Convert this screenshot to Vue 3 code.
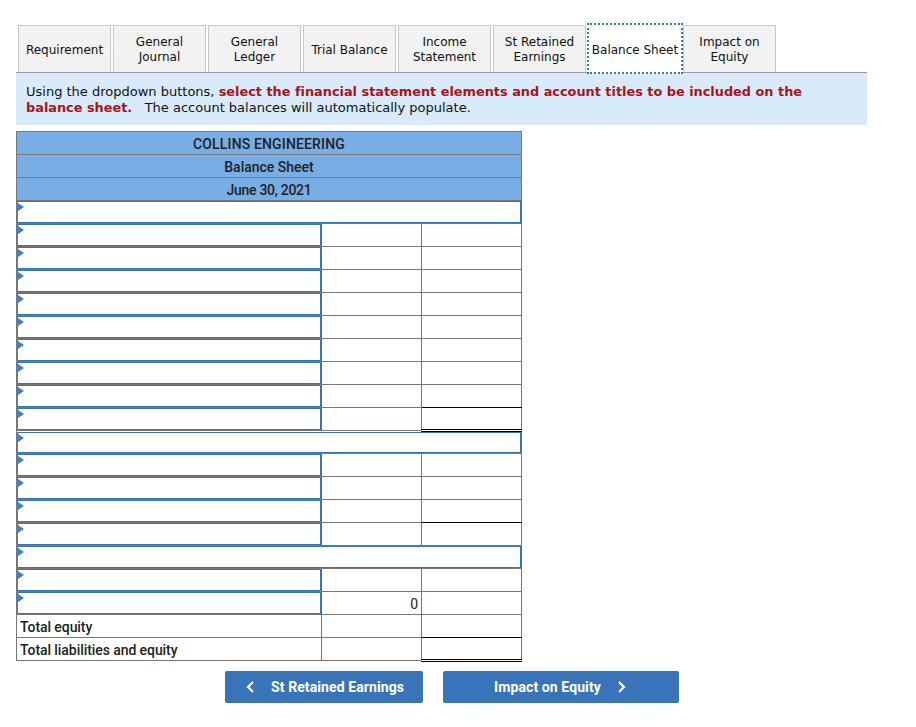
<script setup>
const tabs = [
  { label: ['Requirement'] },
  { label: ['General', 'Journal'] },
  { label: ['General', 'Ledger'] },
  { label: ['Trial Balance'] },
  { label: ['Income', 'Statement'] },
  { label: ['St Retained', 'Earnings'] },
  { label: ['Balance Sheet'], active: true },
  { label: ['Impact on', 'Equity'] },
]
const rows = [
  { full: true },
  {}, {}, {}, {}, {}, {}, {}, { third: 'rule' },
  { third: 'total' },
  { full: true },
  {}, {}, { third: 'rule' }, {},
  { full: true },
  {},
  { second: '0' },
  { label: 'Total equity', third: 'rule' },
  { label: 'Total liabilities and equity', third: 'total' },
]
</script>

<template>
  <div class="page">
    <div class="tabs">
      <div v-for="t in tabs" :key="t.label.join()" class="tab" :class="{ active: t.active }">
        <span v-for="l in t.label" :key="l">{{ l }}</span>
      </div>
    </div>
    <div class="note">
      Using the dropdown buttons, <b>select the financial statement elements and account titles to be included on the balance sheet.</b>&nbsp;&nbsp; The account balances will automatically populate.
    </div>
    <table class="sheet">
      <colgroup><col class="c1" /><col class="c2" /><col class="c3" /></colgroup>
      <tbody>
        <tr class="head"><td colspan="3">COLLINS ENGINEERING</td></tr>
        <tr class="head"><td colspan="3">Balance Sheet</td></tr>
        <tr class="head"><td colspan="3">June 30, 2021</td></tr>
        <template v-for="(r, i) in rows" :key="i">
          <tr v-if="r.full"><td colspan="3" class="slot"><div class="pick"></div></td></tr>
          <tr v-else>
            <td v-if="r.label" class="label">{{ r.label }}</td>
            <td v-else class="slot"><div class="pick"></div></td>
            <td class="num">{{ r.second }}</td>
            <td class="amt" :class="r.third"></td>
          </tr>
        </template>
      </tbody>
    </table>
    <div class="nav">
      <button class="btn prev">
        <svg width="10" height="14" viewBox="0 0 10 14"><path d="M8 2 3 7l5 5" fill="none" stroke="#fff" stroke-width="2.2" /></svg>
        <span>St Retained Earnings</span>
      </button>
      <button class="btn next">
        <span>Impact on Equity</span>
        <svg width="10" height="14" viewBox="0 0 10 14"><path d="M2 2l5 5-5 5" fill="none" stroke="#fff" stroke-width="2.2" /></svg>
      </button>
    </div>
  </div>
</template>

<style scoped>
.page {
  width: 851px;
  margin-left: 16px;
  padding-top: 25px;
  font-family: "DejaVu Sans", Verdana, sans-serif;
  font-variant-ligatures: none;
  color: #111;
}
.tabs {
  display: flex;
  gap: 2px;
  padding-left: 2px;
  height: 47px;
  border-bottom: 1px solid #999;
}
.tab {
  box-sizing: border-box;
  width: 93px;
  height: 47px;
  padding-top: 2px;
  background: #f2f2f2;
  border: 1px solid #c8c8c8;
  border-bottom: none;
  display: flex;
  flex-direction: column;
  align-items: center;
  justify-content: center;
  font-size: 12px;
  line-height: 15px;
  white-space: nowrap;
}
.tab.active {
  background: #fff;
  width: 96px;
  margin: -2px -2px 0 -1px;
  height: 51px;
  padding-top: 3px;
  border: 2px dotted #3a74b8;
  position: relative;
}
.note {
  box-sizing: border-box;
  height: 52px;
  background: #d9ebfa;
  padding: 11px 10px 0;
  font-size: 13px;
  line-height: 16px;
}
.note b { color: #a9141c; font-size: 12.87px; }
.sheet {
  margin-top: 6px;
  width: 506px;
  table-layout: fixed;
  border-collapse: collapse;
  font-family: Roboto, "Liberation Sans", sans-serif;
  font-size: 14px;
  font-weight: 500;
  color: #222;
}
.c1 { width: 305px; }
.c2 { width: 100px; }
.c3 { width: 100px; }
.sheet td {
  height: 23px;
  box-sizing: border-box;
  padding: 1px 0 0;
  border: 1px solid #777;
}
.head td {
  background: #78ade6;
  text-align: center;
}
.head:first-child td { letter-spacing: 0.15px; }
.head:nth-child(3) td { letter-spacing: -0.3px; }
.slot { position: relative; }
.pick {
  position: absolute;
  inset: 0 -1px 0 0;
  border: 1px solid #3a74b8;
  border-left-color: #777;
  border-right-width: 2px;
  box-sizing: border-box;
}
.pick::before {
  content: "";
  position: absolute;
  left: 0;
  top: 1px;
  border-left: 6px solid #3a7fd0;
  border-top: 4px solid transparent;
  border-bottom: 4px solid transparent;
}
.label {
  padding-left: 3px !important;
  letter-spacing: -0.07px;
}
.num {
  text-align: right;
  padding-right: 3px !important;
  font-weight: 400;
}
.sheet td.amt.rule {
  border-bottom: 1px solid #000;
}
.sheet td.amt.total {
  border-bottom: 3px double #000;
}
.nav {
  display: flex;
  gap: 20px;
  margin-top: 9px;
  margin-left: 209px;
}
.btn {
  height: 32px;
  border: none;
  border-radius: 2px;
  background: #3a74b8;
  color: #fff;
  font-family: Roboto, "Liberation Sans", sans-serif;
  font-size: 14px;
  letter-spacing: 0.1px;
  font-weight: 700;
  display: flex;
  align-items: center;
  padding: 0;
}
.prev { width: 198px; padding-left: 20px; gap: 16px; }
.next { width: 236px; padding-left: 51px; gap: 16px; }
</style>
